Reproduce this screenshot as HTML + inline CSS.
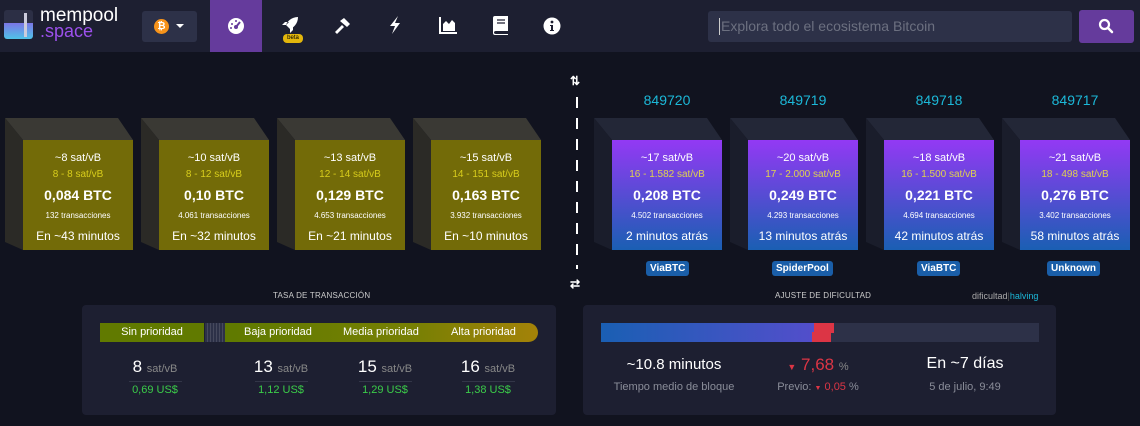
<!DOCTYPE html>
<html><head><meta charset="utf-8"><style>
*{margin:0;padding:0;box-sizing:border-box}
body{width:1140px;height:426px;background:#11131f;font-family:"Liberation Sans",sans-serif;color:#fff;position:relative;overflow:hidden}
.hdr{position:absolute;left:0;top:0;width:1140px;height:52px;background:#1d1f31}
.abs{position:absolute}
.blk{position:absolute;top:118px;width:130px;height:132px}
.front{position:absolute;left:18px;top:22px;width:110px;height:110px;text-align:center}
.front .a{position:absolute;top:12px;width:100%;font-size:11px;color:#fff}
.front .b{position:absolute;top:29px;width:100%;font-size:10px}
.front .c{position:absolute;top:47px;width:100%;font-size:14px;font-weight:bold}
.front .d{position:absolute;top:71px;width:100%;font-size:8px}
.front .e{position:absolute;top:89px;width:100%;font-size:12px}
.mp .front{background:#736b08}
.mp .b{color:#d8cd1c}
.mn .front{background:linear-gradient(#9339f4,#1a5fb3)}
.mn .b{color:#e0d34e}
.num{position:absolute;top:92px;width:110px;text-align:center;color:#1cb8d8;font-size:14px}
.pool{position:absolute;top:261px;height:15px;background:#1a5ea8;border-radius:3px;font-size:10px;font-weight:bold;padding:1px 4px;line-height:13px}
.panel{position:absolute;top:305px;height:110px;background:#1d1f31;border-radius:4px}
.ttl{position:absolute;top:291px;font-size:8px;color:#ccc;letter-spacing:.2px}
.fee{position:absolute;text-align:center;width:90px}
.fee .v{font-size:17px}
.fee .v span{font-size:11px;color:#888}
.fee .u{font-size:11px;color:#3bcc49;margin-top:4px;border-top:1px solid #333648;padding-top:2px;display:inline-block;width:53px}
</style></head><body>
<div class="hdr"></div>
<div class="abs" style="left:4px;top:10px;width:29px;height:29px;border-radius:3px;background:linear-gradient(#2c2f45 0 45%,#7b76e6 45%,#4fc3e8)"></div>
<div class="abs" style="left:24px;top:13px;width:3px;height:24px;background:#ccd"></div>
<div class="abs" style="left:40px;top:6px;font-size:19px;color:#fff;line-height:19px">mempool</div>
<div class="abs" style="left:40px;top:22px;font-size:18px;color:#9c50ec;line-height:19px">.space</div>
<div class="abs" style="left:142px;top:11px;width:55px;height:31px;background:#2d3148;border-radius:3px"></div>
<div class="abs" style="left:154px;top:19px;width:15px;height:15px;border-radius:50%;background:#f7931a;color:#fff;font-size:10px;font-weight:bold;text-align:center;line-height:15px">₿</div>
<div class="abs" style="left:176px;top:24px;border:4px solid transparent;border-top:4px solid #fff"></div>
<div class="abs" style="left:210px;top:0;width:52px;height:52px;background:#653b9c"></div>
<svg class="abs" style="left:226px;top:16px" width="20" height="20" viewBox="0 0 20 20"><circle cx="10" cy="10" r="8" fill="#fff"/><circle cx="10" cy="11" r="2" fill="#653b9c"/><path d="M10 11 L14 6" stroke="#653b9c" stroke-width="2"/><circle cx="6" cy="8" r="1" fill="#653b9c"/><circle cx="10" cy="5" r="1" fill="#653b9c"/><circle cx="5" cy="12" r="1" fill="#653b9c"/></svg>
<svg class="abs" style="left:281px;top:16px" width="18" height="18" viewBox="0 0 18 18"><path d="M17 1 C10 1 6 6 5 9 L9 13 C12 12 17 8 17 1Z M5 9 L1 9 L4 6 L8 6Z M9 13 L9 17 L12 14 L12 10Z" fill="#fff"/></svg>
<div class="abs" style="left:283px;top:34px;width:20px;height:9px;background:#e3b60c;border-radius:4px;font-size:6px;color:#000;text-align:center;line-height:9px">beta</div>
<svg class="abs" style="left:333px;top:17px" width="18" height="18" viewBox="0 0 18 18"><path d="M2 15 L9 8 L11 10 L4 17Z" fill="#fff"/><path d="M7 4 L11 1 L17 7 L14 10 Z" fill="#fff"/></svg>
<svg class="abs" style="left:389px;top:16px" width="12" height="18" viewBox="0 0 12 18"><path d="M9 0 L1 10 L6 10 L3 18 L11 7 L6 7Z" fill="#fff"/></svg>
<svg class="abs" style="left:439px;top:17px" width="18" height="17" viewBox="0 0 18 17"><path d="M1 0 V16 H18" stroke="#fff" stroke-width="2" fill="none"/><path d="M4 14 V7 L7 4 L10 7 L13 3 L16 6 V14Z" fill="#fff"/></svg>
<svg class="abs" style="left:493px;top:16px" width="15" height="19" viewBox="0 0 15 19"><path d="M2 0 H15 V15 H3 Q1 15 1 16.5 Q1 18 3 18 H15 V19 H2 Q0 19 0 17 V2 Q0 0 2 0Z" fill="#fff"/><path d="M4 4 H12 M4 7 H12" stroke="#1d1f31" stroke-width="1.2"/></svg>
<svg class="abs" style="left:543px;top:17px" width="18" height="18" viewBox="0 0 18 18"><circle cx="9" cy="9" r="8.5" fill="#fff"/><circle cx="9" cy="5" r="1.4" fill="#1d1f31"/><path d="M7 8 H10 V13 H11 V14 H7 V13 H8 V9 H7Z" fill="#1d1f31"/></svg>
<div class="abs" style="left:708px;top:11px;width:364px;height:31px;background:#2d3148;border-radius:3px"></div>
<div class="abs" style="left:719px;top:18px;width:1px;height:17px;background:#ccc"></div>
<div class="abs" style="left:721px;top:18px;font-size:14px;color:#6c7080">Explora todo el ecosistema Bitcoin</div>
<div class="abs" style="left:1079px;top:10px;width:55px;height:33px;background:#653b9c;border-radius:3px"></div>
<svg class="abs" style="left:1098px;top:18px" width="16" height="16" viewBox="0 0 16 16"><circle cx="6.5" cy="6.5" r="4.5" stroke="#fff" stroke-width="2.2" fill="none"/><path d="M10 10 L14 14" stroke="#fff" stroke-width="2.5" stroke-linecap="round"/></svg>

<div class="blk mp" style="left:5px"><svg class="abs" width="130" height="132"><polygon points="0,0 113,0 128,22 18,22" fill="#3a3934"/><polygon points="0,0 18,22 18,132 0,124" fill="#2b2a26"/></svg><div class="front"><div class="a">~8 sat/vB</div><div class="b">8 - 8 sat/vB</div><div class="c">0,084 BTC</div><div class="d">132 transacciones</div><div class="e">En ~43 minutos</div></div></div>
<div class="blk mp" style="left:141px"><svg class="abs" width="130" height="132"><polygon points="0,0 113,0 128,22 18,22" fill="#3a3934"/><polygon points="0,0 18,22 18,132 0,124" fill="#2b2a26"/></svg><div class="front"><div class="a">~10 sat/vB</div><div class="b">8 - 12 sat/vB</div><div class="c">0,10 BTC</div><div class="d">4.061 transacciones</div><div class="e">En ~32 minutos</div></div></div>
<div class="blk mp" style="left:277px"><svg class="abs" width="130" height="132"><polygon points="0,0 113,0 128,22 18,22" fill="#3a3934"/><polygon points="0,0 18,22 18,132 0,124" fill="#2b2a26"/></svg><div class="front"><div class="a">~13 sat/vB</div><div class="b">12 - 14 sat/vB</div><div class="c">0,129 BTC</div><div class="d">4.653 transacciones</div><div class="e">En ~21 minutos</div></div></div>
<div class="blk mp" style="left:413px"><svg class="abs" width="130" height="132"><polygon points="0,0 113,0 128,22 18,22" fill="#3a3934"/><polygon points="0,0 18,22 18,132 0,124" fill="#2b2a26"/></svg><div class="front"><div class="a">~15 sat/vB</div><div class="b">14 - 151 sat/vB</div><div class="c">0,163 BTC</div><div class="d">3.932 transacciones</div><div class="e">En ~10 minutos</div></div></div>

<div class="abs" style="left:570px;top:74px;font-size:12px;color:#fff;font-weight:bold">⇅</div>
<div class="abs" style="left:576px;top:97px;width:2px;height:172px;background:repeating-linear-gradient(#fff 0 11px,transparent 11px 21px)"></div>
<div class="abs" style="left:570px;top:277px;font-size:12px;color:#fff;font-weight:bold">⇄</div>

<div class="num" style="left:612px">849720</div>
<div class="num" style="left:748px">849719</div>
<div class="num" style="left:884px">849718</div>
<div class="num" style="left:1020px">849717</div>
<div class="blk mn" style="left:594px"><svg class="abs" width="130" height="132"><polygon points="0,0 113,0 128,22 18,22" fill="#232737"/><polygon points="0,0 18,22 18,132 0,124" fill="#1a1d2b"/></svg><div class="front"><div class="a">~17 sat/vB</div><div class="b">16 - 1.582 sat/vB</div><div class="c">0,208 BTC</div><div class="d">4.502 transacciones</div><div class="e">2 minutos atrás</div></div></div>
<div class="blk mn" style="left:730px"><svg class="abs" width="130" height="132"><polygon points="0,0 113,0 128,22 18,22" fill="#232737"/><polygon points="0,0 18,22 18,132 0,124" fill="#1a1d2b"/></svg><div class="front"><div class="a">~20 sat/vB</div><div class="b">17 - 2.000 sat/vB</div><div class="c">0,249 BTC</div><div class="d">4.293 transacciones</div><div class="e">13 minutos atrás</div></div></div>
<div class="blk mn" style="left:866px"><svg class="abs" width="130" height="132"><polygon points="0,0 113,0 128,22 18,22" fill="#232737"/><polygon points="0,0 18,22 18,132 0,124" fill="#1a1d2b"/></svg><div class="front"><div class="a">~18 sat/vB</div><div class="b">16 - 1.500 sat/vB</div><div class="c">0,221 BTC</div><div class="d">4.694 transacciones</div><div class="e">42 minutos atrás</div></div></div>
<div class="blk mn" style="left:1002px"><svg class="abs" width="130" height="132"><polygon points="0,0 113,0 128,22 18,22" fill="#232737"/><polygon points="0,0 18,22 18,132 0,124" fill="#1a1d2b"/></svg><div class="front"><div class="a">~21 sat/vB</div><div class="b">18 - 498 sat/vB</div><div class="c">0,276 BTC</div><div class="d">3.402 transacciones</div><div class="e">58 minutos atrás</div></div></div>
<div class="pool" style="left:646px">ViaBTC</div>
<div class="pool" style="left:772px">SpiderPool</div>
<div class="pool" style="left:917px">ViaBTC</div>
<div class="pool" style="left:1047px">Unknown</div>

<div class="ttl" style="left:273px">TASA DE TRANSACCIÓN</div>
<div class="panel" style="left:82px;width:474px"></div>
<div class="abs" style="left:100px;top:323px;width:104px;height:19px;background:#617a00;font-size:11px;text-align:center;line-height:19px">Sin prioridad</div>
<div class="abs" style="left:205px;top:323px;width:20px;height:19px;background:repeating-linear-gradient(90deg,#2d3148 0 2px,#46495d 2px 3px)"></div>
<div class="abs" style="left:225px;top:323px;width:313px;height:19px;background:linear-gradient(90deg,#5f7a00,#778004 60%,#a48208);border-radius:0 10px 10px 0;font-size:11px;line-height:19px"><span class="abs" style="left:19px">Baja prioridad</span><span class="abs" style="left:118px">Media prioridad</span><span class="abs" style="left:226px">Alta prioridad</span></div>
<div class="fee" style="left:110px;top:357px"><div class="v">8 <span>sat/vB</span></div><div class="u">0,69 US$</div></div>
<div class="fee" style="left:236px;top:357px"><div class="v">13 <span>sat/vB</span></div><div class="u">1,12 US$</div></div>
<div class="fee" style="left:340px;top:357px"><div class="v">15 <span>sat/vB</span></div><div class="u">1,29 US$</div></div>
<div class="fee" style="left:443px;top:357px"><div class="v">16 <span>sat/vB</span></div><div class="u">1,38 US$</div></div>

<div class="ttl" style="left:775px">AJUSTE DE DIFICULTAD</div>
<div class="abs" style="left:972px;top:291px;font-size:9px;color:#aaa">dificultad<span style="color:#555">|</span><span style="color:#1cb8d8">halving</span></div>
<div class="panel" style="left:583px;width:473px"></div>
<div class="abs" style="left:601px;top:323px;width:438px;height:19px;background:#2d3148"></div>
<div class="abs" style="left:601px;top:323px;width:214px;height:19px;background:linear-gradient(90deg,#1a5fb3,#534ecb)"></div>
<div class="abs" style="left:814px;top:323px;width:20px;height:10px;background:#dc3545"></div>
<div class="abs" style="left:812px;top:332px;width:19px;height:10px;background:#dc3545"></div>
<div class="abs" style="left:601px;top:356px;width:146px;text-align:center;font-size:15px">~10.8 minutos</div>
<div class="abs" style="left:601px;top:381px;width:146px;text-align:center;font-size:11px;color:#8a8d99">Tiempo medio de bloque</div>
<div class="abs" style="left:745px;top:355px;width:146px;text-align:center;font-size:17px;color:#dc3545"><span style="font-size:9px">▼</span> 7,68 <span style="font-size:11px;color:#888">%</span></div>
<div class="abs" style="left:745px;top:381px;width:146px;text-align:center;font-size:11px;color:#8a8d99">Previo: <span style="color:#dc3545;font-size:7px">▼</span> <span style="color:#dc3545">0,05</span> %</div>
<div class="abs" style="left:892px;top:355px;width:146px;text-align:center;font-size:16px">En ~7 días</div>
<div class="abs" style="left:892px;top:381px;width:146px;text-align:center;font-size:11px;color:#8a8d99">5 de julio, 9:49</div>
</body></html>
